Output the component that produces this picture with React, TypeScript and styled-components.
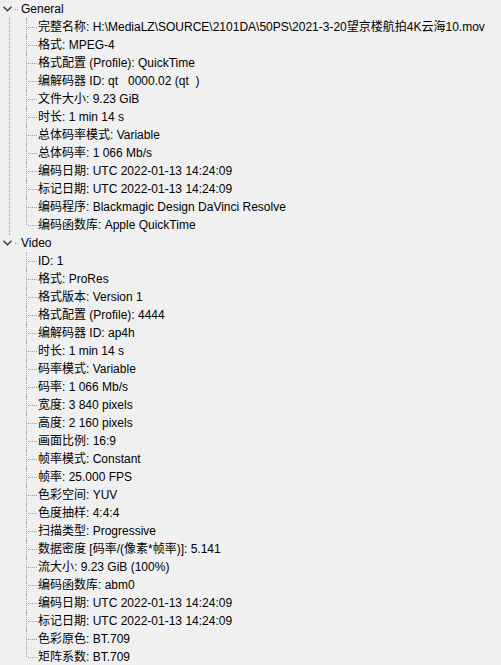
import styled, { createGlobalStyle } from "styled-components";

const GlobalStyle = createGlobalStyle`
  html, body {
    margin: 0;
    padding: 0;
    background: #f0f0f0;
    overflow: hidden;
  }
  body {
    font-family: "Liberation Sans", Arial, "Noto Sans CJK SC", sans-serif;
    font-size: 12px;
    color: #000;
  }
`;

const Tree = styled.ul`
  list-style: none;
  margin: 0;
  padding: 0;
  width: 501px;
  height: 665px;
  overflow: hidden;
`;

const RootNode = styled.li<{ $first?: boolean; $last?: boolean }>`
  position: relative;

  &::before {
    content: "";
    position: absolute;
    left: 9px;
    top: ${(p) => (p.$first ? "9px" : "0")};
    ${(p) => (p.$last ? "height: 9px;" : "bottom: 0;")}
    border-left: 1px dotted #a0a0a0;
  }
`;

const RootRow = styled.div`
  position: relative;
  height: 18px;
  line-height: 18px;
  padding-left: 21px;
  white-space: pre;

  &::before {
    content: "";
    position: absolute;
    left: 10px;
    top: 9px;
    width: 8px;
    border-top: 1px dotted #a0a0a0;
  }
`;

const Expander = styled.span`
  position: absolute;
  left: 0;
  top: 1px;
  width: 15px;
  height: 16px;
  background: #f0f0f0;
  display: flex;
  align-items: center;
  justify-content: center;
  z-index: 1;
`;

const Children = styled.ul`
  list-style: none;
  margin: 0;
  padding: 0;
`;

const Leaf = styled.li<{ $last?: boolean }>`
  position: relative;
  height: 18px;
  line-height: 18px;
  padding-left: 38px;
  white-space: pre;

  &::before {
    content: "";
    position: absolute;
    left: 26px;
    top: 0;
    ${(p) => (p.$last ? "height: 9px;" : "bottom: 0;")}
    border-left: 1px dotted #a0a0a0;
  }

  &::after {
    content: "";
    position: absolute;
    left: 28px;
    top: 9px;
    width: 9px;
    border-top: 1px dotted #a0a0a0;
  }
`;

const Chevron = () => (
  <svg width="9" height="6" viewBox="0 0 9 6">
    <path d="M0.5 0.8 L4.5 4.8 L8.5 0.8" fill="none" stroke="#333" strokeWidth="1.3" />
  </svg>
);

const sections: { title: string; items: string[] }[] = [
  {
    title: "General",
    items: [
      "完整名称: H:\\MediaLZ\\SOURCE\\2101DA\\50PS\\2021-3-20望京楼航拍4K云海10.mov",
      "格式: MPEG-4",
      "格式配置 (Profile): QuickTime",
      "编解码器 ID: qt   0000.02 (qt  )",
      "文件大小: 9.23 GiB",
      "时长: 1 min 14 s",
      "总体码率模式: Variable",
      "总体码率: 1 066 Mb/s",
      "编码日期: UTC 2022-01-13 14:24:09",
      "标记日期: UTC 2022-01-13 14:24:09",
      "编码程序: Blackmagic Design DaVinci Resolve",
      "编码函数库: Apple QuickTime",
    ],
  },
  {
    title: "Video",
    items: [
      "ID: 1",
      "格式: ProRes",
      "格式版本: Version 1",
      "格式配置 (Profile): 4444",
      "编解码器 ID: ap4h",
      "时长: 1 min 14 s",
      "码率模式: Variable",
      "码率: 1 066 Mb/s",
      "宽度: 3 840 pixels",
      "高度: 2 160 pixels",
      "画面比例: 16:9",
      "帧率模式: Constant",
      "帧率: 25.000 FPS",
      "色彩空间: YUV",
      "色度抽样: 4:4:4",
      "扫描类型: Progressive",
      "数据密度 [码率/(像素*帧率)]: 5.141",
      "流大小: 9.23 GiB (100%)",
      "编码函数库: abm0",
      "编码日期: UTC 2022-01-13 14:24:09",
      "标记日期: UTC 2022-01-13 14:24:09",
      "色彩原色: BT.709",
      "矩阵系数: BT.709",
    ],
  },
];

export default function App() {
  return (
    <>
      <GlobalStyle />
      <Tree>
        {sections.map((s, i) => (
          <RootNode key={s.title} $first={i === 0} $last={i === sections.length - 1}>
            <RootRow>
              <Expander>
                <Chevron />
              </Expander>
              {s.title}
            </RootRow>
            <Children>
              {s.items.map((item, j) => (
                <Leaf key={j} $last={j === s.items.length - 1}>
                  {item}
                </Leaf>
              ))}
            </Children>
          </RootNode>
        ))}
      </Tree>
    </>
  );
}
